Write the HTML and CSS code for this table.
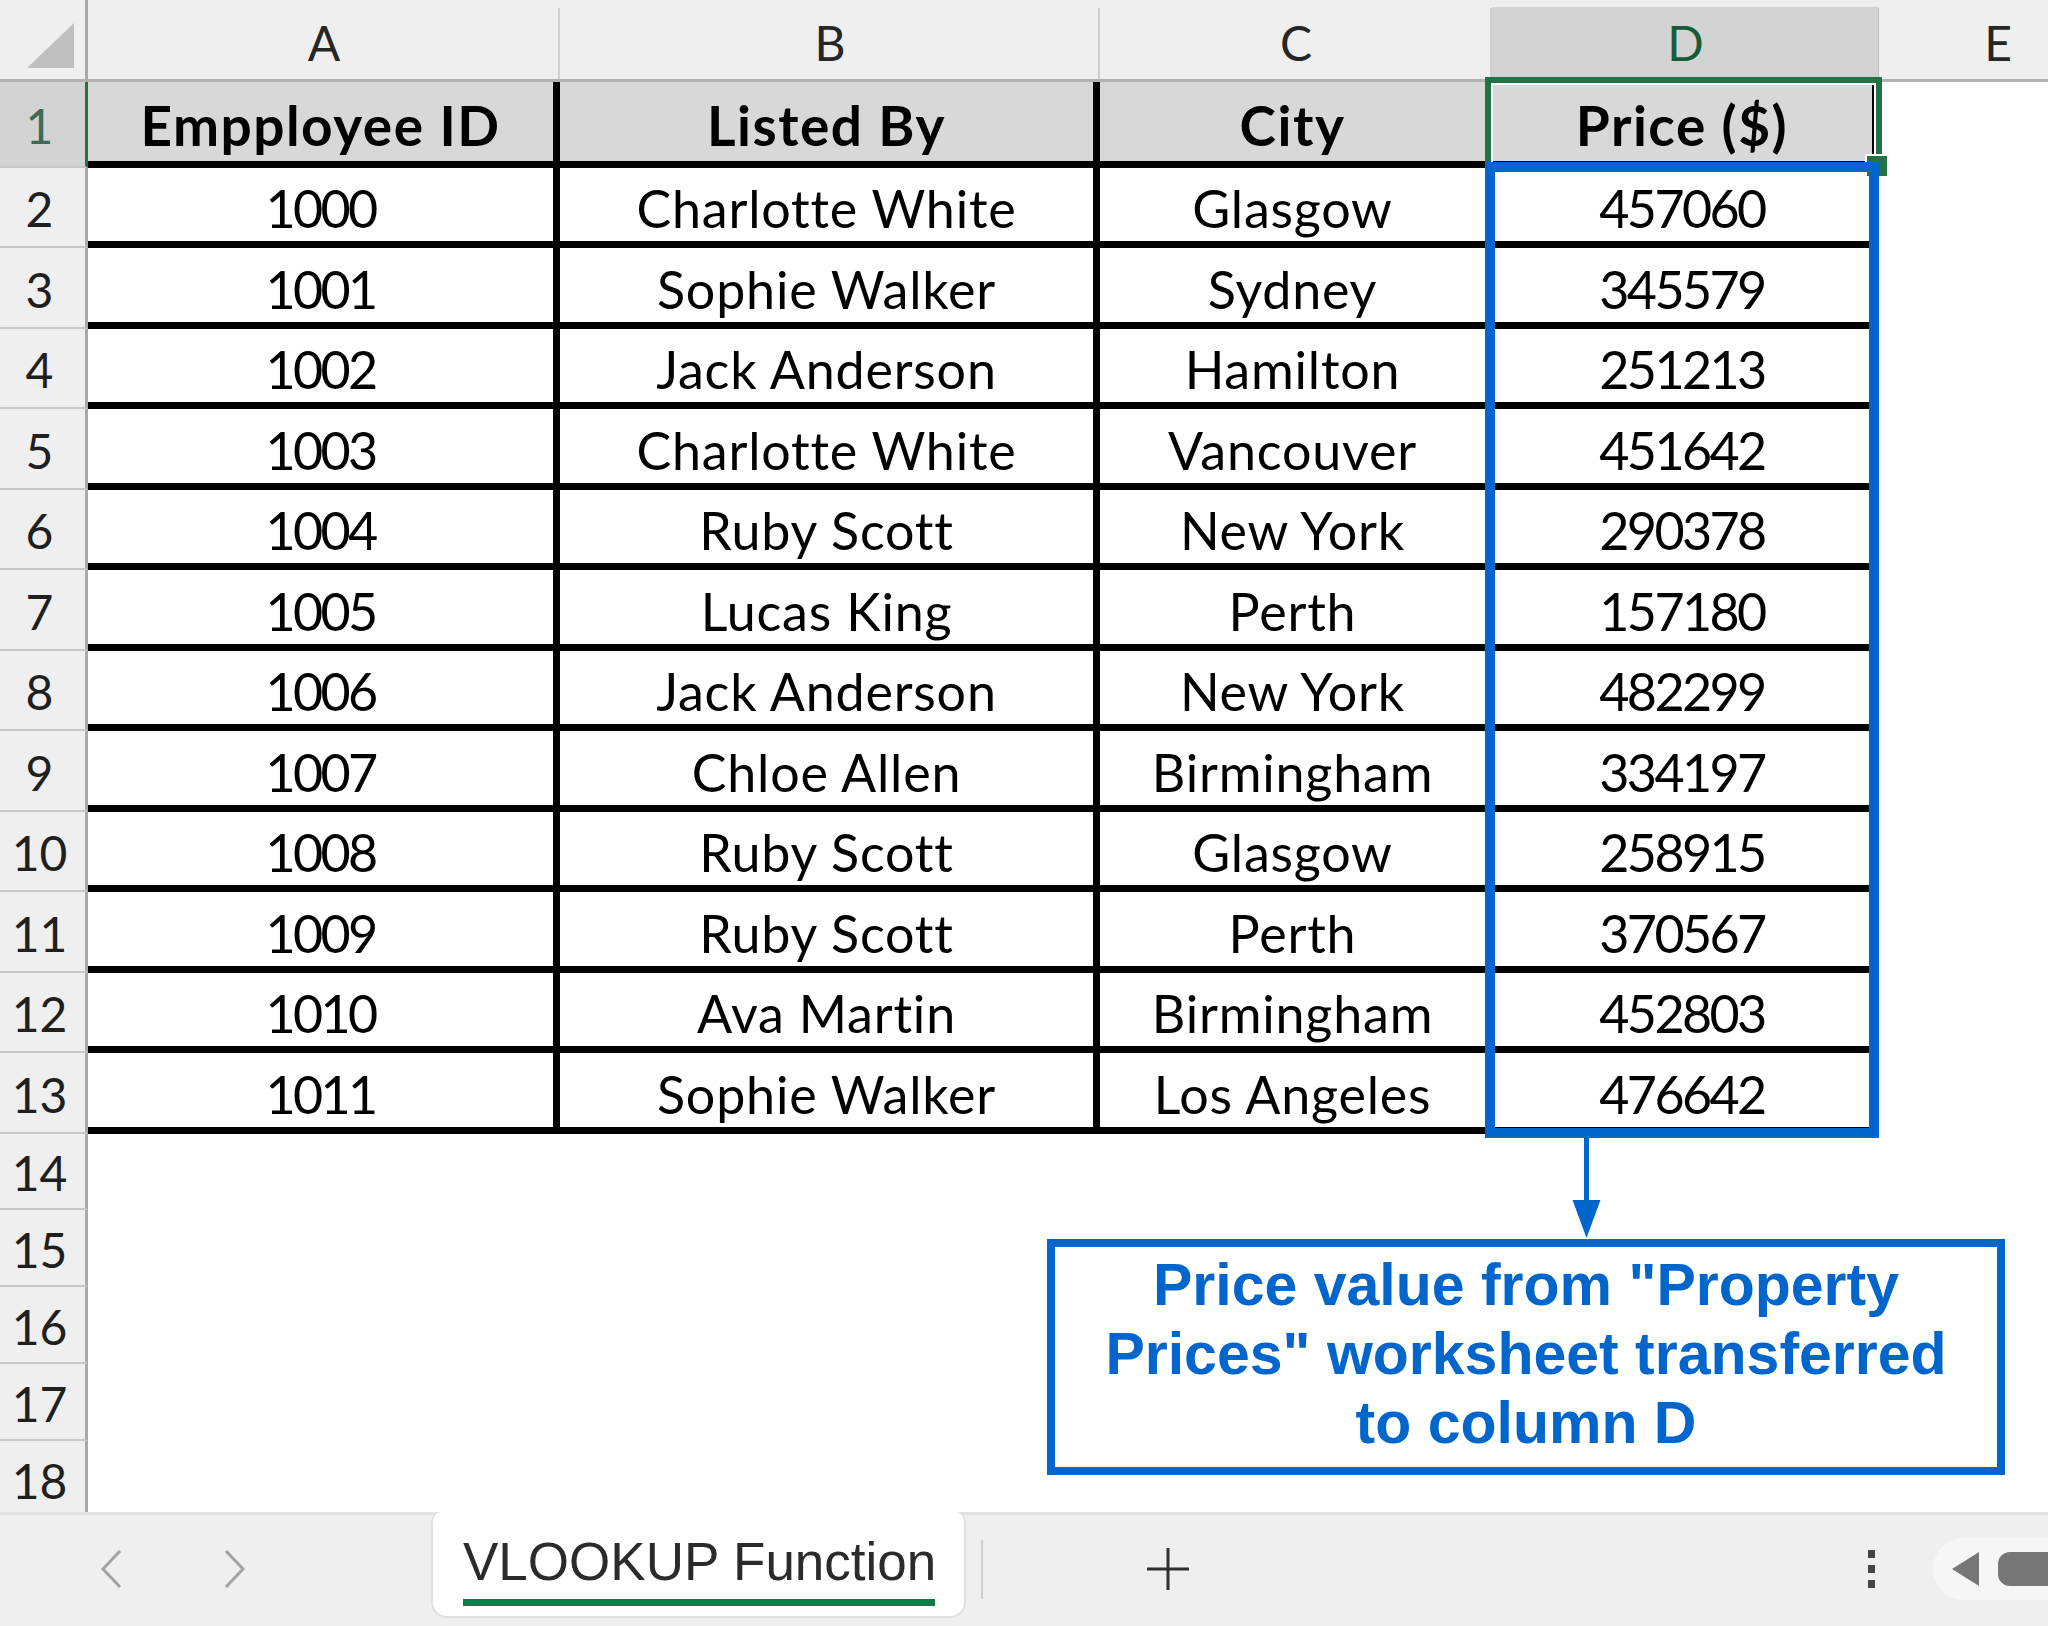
FILE: index.html
```html
<!DOCTYPE html>
<html>
<head>
<meta charset="utf-8">
<link rel="stylesheet" href="styles.css">
</head>
<body>
<div class="app">
  <div class="grid">
    <div class="corner"><svg width="47" height="45" viewBox="0 0 47 45"><polygon points="47,0 47,45 0,45" fill="#bfbfbf"/></svg></div>
    <div class="ch">A</div>
    <div class="ch">B</div>
    <div class="ch">C</div>
    <div class="ch sel">D</div>
    <div class="ch">E</div>

    <div class="rh r1">1</div>
    <div class="c h">Empployee ID</div><div class="c h">Listed By</div><div class="c h">City</div><div class="c h">Price ($)</div><div class="e"></div>

    <div class="rh">2</div>
    <div class="c n">1000</div><div class="c">Charlotte White</div><div class="c">Glasgow</div><div class="c n">457060</div><div class="e"></div>
    <div class="rh">3</div>
    <div class="c n">1001</div><div class="c">Sophie Walker</div><div class="c">Sydney</div><div class="c n">345579</div><div class="e"></div>
    <div class="rh">4</div>
    <div class="c n">1002</div><div class="c">Jack Anderson</div><div class="c">Hamilton</div><div class="c n">251213</div><div class="e"></div>
    <div class="rh">5</div>
    <div class="c n">1003</div><div class="c">Charlotte White</div><div class="c">Vancouver</div><div class="c n">451642</div><div class="e"></div>
    <div class="rh">6</div>
    <div class="c n">1004</div><div class="c">Ruby Scott</div><div class="c">New York</div><div class="c n">290378</div><div class="e"></div>
    <div class="rh">7</div>
    <div class="c n">1005</div><div class="c">Lucas King</div><div class="c">Perth</div><div class="c n">157180</div><div class="e"></div>
    <div class="rh">8</div>
    <div class="c n">1006</div><div class="c">Jack Anderson</div><div class="c">New York</div><div class="c n">482299</div><div class="e"></div>
    <div class="rh">9</div>
    <div class="c n">1007</div><div class="c">Chloe Allen</div><div class="c">Birmingham</div><div class="c n">334197</div><div class="e"></div>
    <div class="rh">10</div>
    <div class="c n">1008</div><div class="c">Ruby Scott</div><div class="c">Glasgow</div><div class="c n">258915</div><div class="e"></div>
    <div class="rh">11</div>
    <div class="c n">1009</div><div class="c">Ruby Scott</div><div class="c">Perth</div><div class="c n">370567</div><div class="e"></div>
    <div class="rh">12</div>
    <div class="c n">1010</div><div class="c">Ava Martin</div><div class="c">Birmingham</div><div class="c n">452803</div><div class="e"></div>
    <div class="rh">13</div>
    <div class="c n">1011</div><div class="c">Sophie Walker</div><div class="c">Los Angeles</div><div class="c n">476642</div><div class="e"></div>

    <div class="rh lo">14</div><div class="blank"></div>
    <div class="rh lo">15</div><div class="blank"></div>
    <div class="rh lo">16</div><div class="blank"></div>
    <div class="rh lo">17</div><div class="blank"></div>
    <div class="rh lo">18</div><div class="blank"></div>
  </div>

  <div class="tabbar">
    <div class="nav prev"><svg width="26" height="40" viewBox="0 0 26 40"><polyline points="22,2 5,20 22,38" fill="none" stroke="#a3a3a3" stroke-width="3"/></svg></div>
    <div class="nav next"><svg width="26" height="40" viewBox="0 0 26 40"><polyline points="4,2 21,20 4,38" fill="none" stroke="#a3a3a3" stroke-width="3"/></svg></div>
    <div class="tab">
      <div class="tab-label">VLOOKUP Function</div>
      <div class="tab-line"></div>
    </div>
    <div class="tab-sep"></div>
    <div class="plus"><svg width="42" height="42" viewBox="0 0 42 42"><path d="M21 0V42M0 21H42" stroke="#303030" stroke-width="3"/></svg></div>
    <div class="dots"><span></span><span></span><span></span></div>
    <div class="scroll">
      <svg class="scroll-arrow" width="27" height="34" viewBox="0 0 27 34"><polygon points="27,0 27,34 0,17" fill="#767676"/></svg>
      <div class="thumb"></div>
    </div>
  </div>

  <div class="selection"></div>
  <div class="handle"></div>
  <div class="bluebox"></div>
  <svg class="arrow" width="32" height="102" viewBox="0 0 32 102">
    <line x1="16.5" y1="0" x2="16.5" y2="66" stroke="#0066cc" stroke-width="5"/>
    <polygon points="2.5,62 30.5,62 16.5,100" fill="#0066cc"/>
  </svg>
  <div class="callout">Price value from "Property<br>Prices" worksheet transferred<br>to column D</div>
</div>
</body>
</html>
```

FILE: styles.css
```css
* { box-sizing: border-box; }

html, body {
  margin: 0;
  padding: 0;
  background: #ffffff;
}

.app {
  position: relative;
  width: 2048px;
  height: 1626px;
  overflow: hidden;
  font-family: Lato, "Liberation Sans", sans-serif;
}

.grid {
  display: grid;
  grid-template-columns: 88px 472px 540px 392px 387px 238px;
  grid-template-rows: 82px 86px 80px 81px 80px 81px 80px 81px 80px 81px 80px 81px 80px 81px 76px 77px 77px 77px 77px;
  width: 2048px;
  height: 1512px;
  overflow: hidden;
}

.corner {
  background: #efefef;
  border-right: 3px solid #a9a9a9;
  border-bottom: 3px solid #b3b3b3;
  display: flex;
  align-items: flex-end;
  justify-content: flex-end;
  padding: 0 11px 11px 0;
}

.ch {
  position: relative;
  background: #efefef;
  border-bottom: 3px solid #b3b3b3;
  display: flex;
  align-items: flex-end;
  justify-content: center;
  font-size: 48px;
  line-height: 1;
  color: #262626;
  padding-bottom: 12px;
}

.ch::after {
  content: "";
  position: absolute;
  right: 0;
  top: 8px;
  bottom: 0;
  width: 2px;
  background: #d0d0d0;
}

.ch.sel {
  background: linear-gradient(#efefef 0 7px, #d3d3d3 7px);
  color: #185c37;
}

.ch.sel::after { background: #bdbdbd; right: -1px; }

.rh {
  background: #efefef;
  border-right: 3px solid #a9a9a9;
  border-bottom: 2px solid #c8c8c8;
  display: flex;
  align-items: flex-end;
  justify-content: center;
  padding-right: 6px;
  padding-bottom: 13px;
  font-size: 48px;
  line-height: 1;
  color: #1f1f1f;
}

.rh.r1 {
  background: #d3d3d3;
  border-right-color: #217346;
  color: #3d6a55;
  padding-bottom: 16px;
}

.rh.lo { padding-bottom: 11px; }

.c {
  border-right: 7px solid #000;
  border-bottom: 7px solid #000;
  display: flex;
  align-items: flex-end;
  justify-content: center;
  font-size: 52px;
  line-height: 1;
  letter-spacing: 0.8px;
  color: #000;
  padding-bottom: 7px;
  white-space: nowrap;
}

.c.n { letter-spacing: -2.6px; }

.c.h {
  background: #d8d8d8;
  font-weight: 700;
  font-size: 55px;
  letter-spacing: 1.5px;
  padding-bottom: 8px;
}

.e { background: #fff; }

.blank {
  grid-column: span 5;
  background: #fff;
}

/* sheet tab bar */
.tabbar {
  display: flex;
  align-items: center;
  height: 114px;
  background: #efefef;
  box-shadow: inset 0 3px 0 #e1e1e1;
}

.nav { display: flex; }
.nav.prev { margin-left: 98px; }
.nav.next { margin-left: 98px; }

.tab {
  align-self: flex-start;
  margin-left: 183px;
  width: 535px;
  height: 106px;
  background: #fff;
  border: 2px solid #e0e0e0;
  border-top: none;
  border-radius: 10px 10px 16px 16px;
  padding: 23px 0 0 30px;
  display: flex;
  flex-direction: column;
}

.tab-label {
  font-family: "Liberation Sans", Arial, sans-serif;
  font-size: 53px;
  line-height: 1;
  color: #2b2b2b;
  white-space: nowrap;
}

.tab-line {
  margin-top: 11px;
  width: 472px;
  height: 7px;
  background: #137a43;
}

.tab-sep {
  margin-left: 15px;
  width: 2px;
  height: 59px;
  background: #cfcfcf;
}

.plus {
  display: flex;
  margin-left: 164px;
}

.dots {
  margin-left: 679px;
  width: 8px;
  display: flex;
  flex-direction: column;
  gap: 7px;
}

.dots span {
  display: block;
  width: 7px;
  height: 8px;
  background: #444;
}

.scroll {
  margin-left: 57px;
  flex: 1;
  height: 62px;
  border-radius: 31px 0 0 31px;
  background: #f6f6f6;
  display: flex;
  align-items: center;
  padding-left: 19px;
}

.scroll-arrow { display: block; }

.thumb {
  margin-left: 19px;
  flex: 1;
  height: 34px;
  border-radius: 12px 0 0 12px;
  background: #767676;
}

/* overlays */
.selection {
  position: absolute;
  left: 1485px;
  top: 77px;
  width: 397px;
  height: 95px;
  border: 6px solid #217346;
  box-shadow: inset 0 0 0 2px #ffffff;
}

.handle {
  position: absolute;
  left: 1867px;
  top: 156px;
  width: 20px;
  height: 20px;
  background: #217346;
  box-shadow: 0 0 0 2px #ffffff;
}

.bluebox {
  position: absolute;
  left: 1485px;
  top: 162px;
  width: 394px;
  height: 976px;
  border: 10px solid #0066cc;
}

.arrow {
  position: absolute;
  left: 1570px;
  top: 1138px;
}

.callout {
  position: absolute;
  left: 1047px;
  top: 1239px;
  width: 958px;
  height: 236px;
  border: 8px solid #0066cc;
  background: #fff;
  padding-top: 4px;
  text-align: center;
  font-family: "Liberation Sans", Arial, sans-serif;
  font-weight: 700;
  font-size: 59px;
  line-height: 69px;
  color: #0066cc;
  white-space: nowrap;
}
```
